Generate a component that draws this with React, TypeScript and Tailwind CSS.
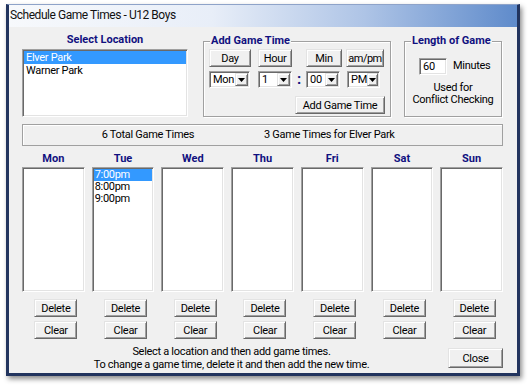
const raised =
  "bg-[#f0f0f0] border border-t-[#e3e3e3] border-l-[#e3e3e3] border-r-[#696969] border-b-[#696969] shadow-[inset_1px_1px_0_#fff,inset_-1px_-1px_0_#a0a0a0]";
const sunken =
  "bg-white border border-t-[#a0a0a0] border-l-[#a0a0a0] border-r-white border-b-white shadow-[inset_1px_1px_0_#696969,inset_-1px_-1px_0_#e3e3e3]";
const heading = "font-bold text-[11px] leading-[12px] text-[#10107f] tracking-normal";

const days = ["Mon", "Tue", "Wed", "Thu", "Fri", "Sat", "Sun"];
const tueTimes = ["7:00pm", "8:00pm", "9:00pm"];

function Btn({ label, className = "" }: { label: string; className?: string }) {
  return (
    <button className={`${raised} h-[18px] flex items-center justify-center leading-none whitespace-nowrap ${className}`}>
      {label}
    </button>
  );
}

function Combo({ value, width }: { value: string; width: string }) {
  return (
    <div className={`${sunken} ${width} h-[17px] p-[1px] flex items-stretch`}>
      <span className="flex-1 pl-[2px] leading-[13px]">{value}</span>
      <span className={`${raised} w-[13px] flex items-center justify-center`}>
        <svg width="7" height="4" viewBox="0 0 7 4">
          <path d="M0 0h7L3.5 4z" fill="#000" />
        </svg>
      </span>
    </div>
  );
}

function Group({ title, width, children }: { title: string; width: string; children: React.ReactNode }) {
  return (
    <div
      className={`${width} mt-[7px] h-[76px] border border-[#a0a0a0] shadow-[inset_1px_1px_0_#fff,1px_1px_0_#fff]`}
    >
      <div className={`${heading} -mt-[7px] ml-[6px] w-fit px-[1px] bg-[#f0f0f0]`}>{title}</div>
      {children}
    </div>
  );
}

export default function App() {
  return (
    <div className="w-[530px] h-[389px] bg-white pt-[4px] pl-[6px] font-['Roboto',sans-serif] text-[11px] tracking-[-0.3px] text-black">
      <div className="w-[514px] border-x-[3px] border-b-[3px] border-t border-[#22345e] border-t-[#8ea3c9] shadow-[2px_3px_5px_rgba(0,0,0,0.45)]">
        {/* Title bar */}
        <div className="h-[22px] pt-[3px] pl-[1px] bg-[linear-gradient(to_right,#f7f9fc_0%,#e8eef8_40%,#aec4e6_70%,#5f8bcb_100%)] text-[12px] leading-[14px] tracking-[-0.45px] text-[#111]">
          Schedule Game Times - U12 Boys
        </div>

        {/* Client area */}
        <div className="bg-[#f0f0f0] pt-[7px] pb-[2px] pl-[13px] pr-[14px]">
          {/* Top row */}
          <div className="flex items-start">
            <div className="w-[166px]">
              <div className={`${heading} text-center`}>Select Location</div>
              <div className={`${sunken} mt-[3px] h-[68px] p-[1px] leading-[13px]`}>
                <div className="bg-[#3399ff] text-white pl-[2px]">Elver Park</div>
                <div className="pl-[2px]">Warner Park</div>
              </div>
            </div>

            <div className="ml-[15px]">
              <Group title="Add Game Time" width="w-[188px]">
                <div className="flex mt-[2px] pl-[5px]">
                  <Btn label="Day" className="w-[42px]" />
                  <Btn label="Hour" className="w-[34px] ml-[7px]" />
                  <Btn label="Min" className="w-[36px] ml-[14px]" />
                  <Btn label="am/pm" className="w-[38px] ml-[4px] tracking-[-0.5px]" />
                </div>
                <div className="flex items-center mt-[4px] pl-[5px]">
                  <Combo value="Mon" width="w-[41px]" />
                  <div className="w-[8px]" />
                  <Combo value="1" width="w-[34px]" />
                  <span className="w-[14px] text-center font-bold text-[15px] leading-[15px] text-[#10107f]">:</span>
                  <Combo value="00" width="w-[34px]" />
                  <div className="w-[7px]" />
                  <Combo value="PM" width="w-[33px]" />
                </div>
                <div className="flex justify-end mt-[8px] pr-[5px]">
                  <Btn label="Add Game Time" className="w-[90px]" />
                </div>
              </Group>
            </div>

            <div className="ml-[13px]">
              <Group title="Length of Game" width="w-[98px]">
                <div className="flex items-center mt-[11px] pl-[14px]">
                  <div className={`${sunken} w-[28px] h-[17px] pl-[3px] leading-[15px]`}>60</div>
                  <span className="ml-[6px]">Minutes</span>
                </div>
                <div className="mt-[7px] text-center leading-[12px]">
                  Used for
                  <br />
                  Conflict Checking
                </div>
              </Group>
            </div>
          </div>

          {/* Status */}
          <div className="mt-[7px] h-[22px] flex items-center border border-[#a0a0a0] shadow-[inset_1px_1px_0_#fff]">
            <div className="w-[240px] pl-[10px] text-center">6 Total Game Times</div>
            <div className="ml-[1px]">3 Game Times for Elver Park</div>
          </div>

          {/* Day columns */}
          <div className="mt-[7px] grid grid-cols-7 gap-x-[7px]">
            {days.map((d) => (
              <div key={d} className="flex flex-col">
                <div className={`${heading} text-center`}>{d}</div>
                <div className={`${sunken} mt-[2px] h-[125px] p-[1px] leading-[12px]`}>
                  {d === "Tue" &&
                    tueTimes.map((t, i) => (
                      <div key={t} className={`pl-[1px] ${i === 0 ? "bg-[#3399ff] text-white" : ""}`}>
                        {t}
                      </div>
                    ))}
                </div>
                <div className="flex flex-col items-center pl-[5px]">
                  <Btn label="Delete" className="w-[43px] mt-[7px]" />
                  <Btn label="Clear" className="w-[43px] mt-[4px]" />
                </div>
              </div>
            ))}
          </div>

          {/* Bottom */}
          <div className="mt-[6px] flex items-start">
            <div className="flex-1 text-center leading-[13px]">
              Select a location and then add game times.
              <br />
              To change a game time, delete it and then add the new time.
            </div>
            <Btn label="Close" className="w-[55px] h-[20px] mt-[3px] ml-[7px]" />
          </div>
        </div>
      </div>
    </div>
  );
}
